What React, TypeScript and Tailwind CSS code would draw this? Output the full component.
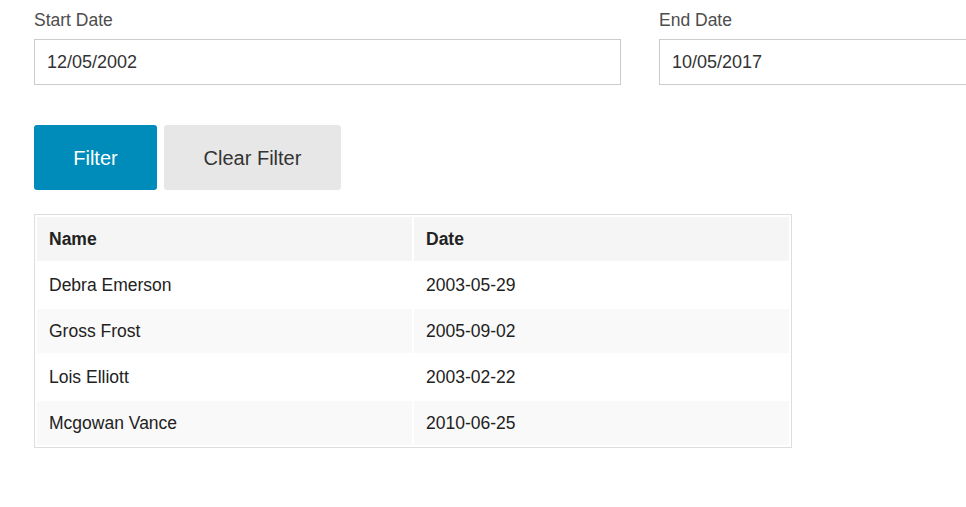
import React from 'react';

const rows = [
  { name: 'Debra Emerson', date: '2003-05-29' },
  { name: 'Gross Frost', date: '2005-09-02' },
  { name: 'Lois Elliott', date: '2003-02-22' },
  { name: 'Mcgowan Vance', date: '2010-06-25' },
];

const DateField = ({ label, value }: { label: string; value: string }) => (
  <div className="w-[587px] shrink-0">
    <label className="block h-[26px] text-[17.5px] leading-[26px] text-[#4d4d4d]">{label}</label>
    <input
      readOnly
      value={value}
      className="mt-[6px] block h-[46px] w-full border border-[#cccccc] bg-white px-[12px] pt-[1px] text-[18px] text-[#333] outline-none"
    />
  </div>
);

export default function App() {
  return (
    <div
      className="h-[507px] w-[966px] overflow-hidden bg-white pl-[34px] pt-[7px]"
      style={{ fontFamily: '"Liberation Sans", Arial, sans-serif' }}
    >
      <div className="flex gap-[38px]">
        <DateField label="Start Date" value="12/05/2002" />
        <DateField label="End Date" value="10/05/2017" />
      </div>

      <div className="mt-[40px] flex gap-[7px]">
        <button className="h-[65px] w-[123px] rounded-[3px] bg-[#008cba] pt-[1px] text-[20px] text-white">Filter</button>
        <button className="h-[65px] w-[177px] rounded-[3px] bg-[#e7e7e7] pt-[1px] text-[20px] text-[#333]">Clear Filter</button>
      </div>

      <table className="mt-[24px] w-[758px] table-fixed border-separate border-spacing-[2px] border border-[#dddddd] text-[17.5px] text-[#222]">
        <thead>
          <tr>
            <th className="h-[44px] w-1/2 bg-[#f5f5f5] px-[12px] pt-[1px] text-left font-bold">Name</th>
            <th className="h-[44px] w-1/2 bg-[#f5f5f5] px-[12px] pt-[1px] text-left font-bold">Date</th>
          </tr>
        </thead>
        <tbody>
          {rows.map((r, i) => (
            <tr key={r.name} className={i % 2 === 1 ? 'bg-[#f9f9f9]' : 'bg-white'}>
              <td className="h-[44px] px-[12px] pt-[1px]">{r.name}</td>
              <td className="h-[44px] px-[12px] pt-[1px]">{r.date}</td>
            </tr>
          ))}
        </tbody>
      </table>
    </div>
  );
}
